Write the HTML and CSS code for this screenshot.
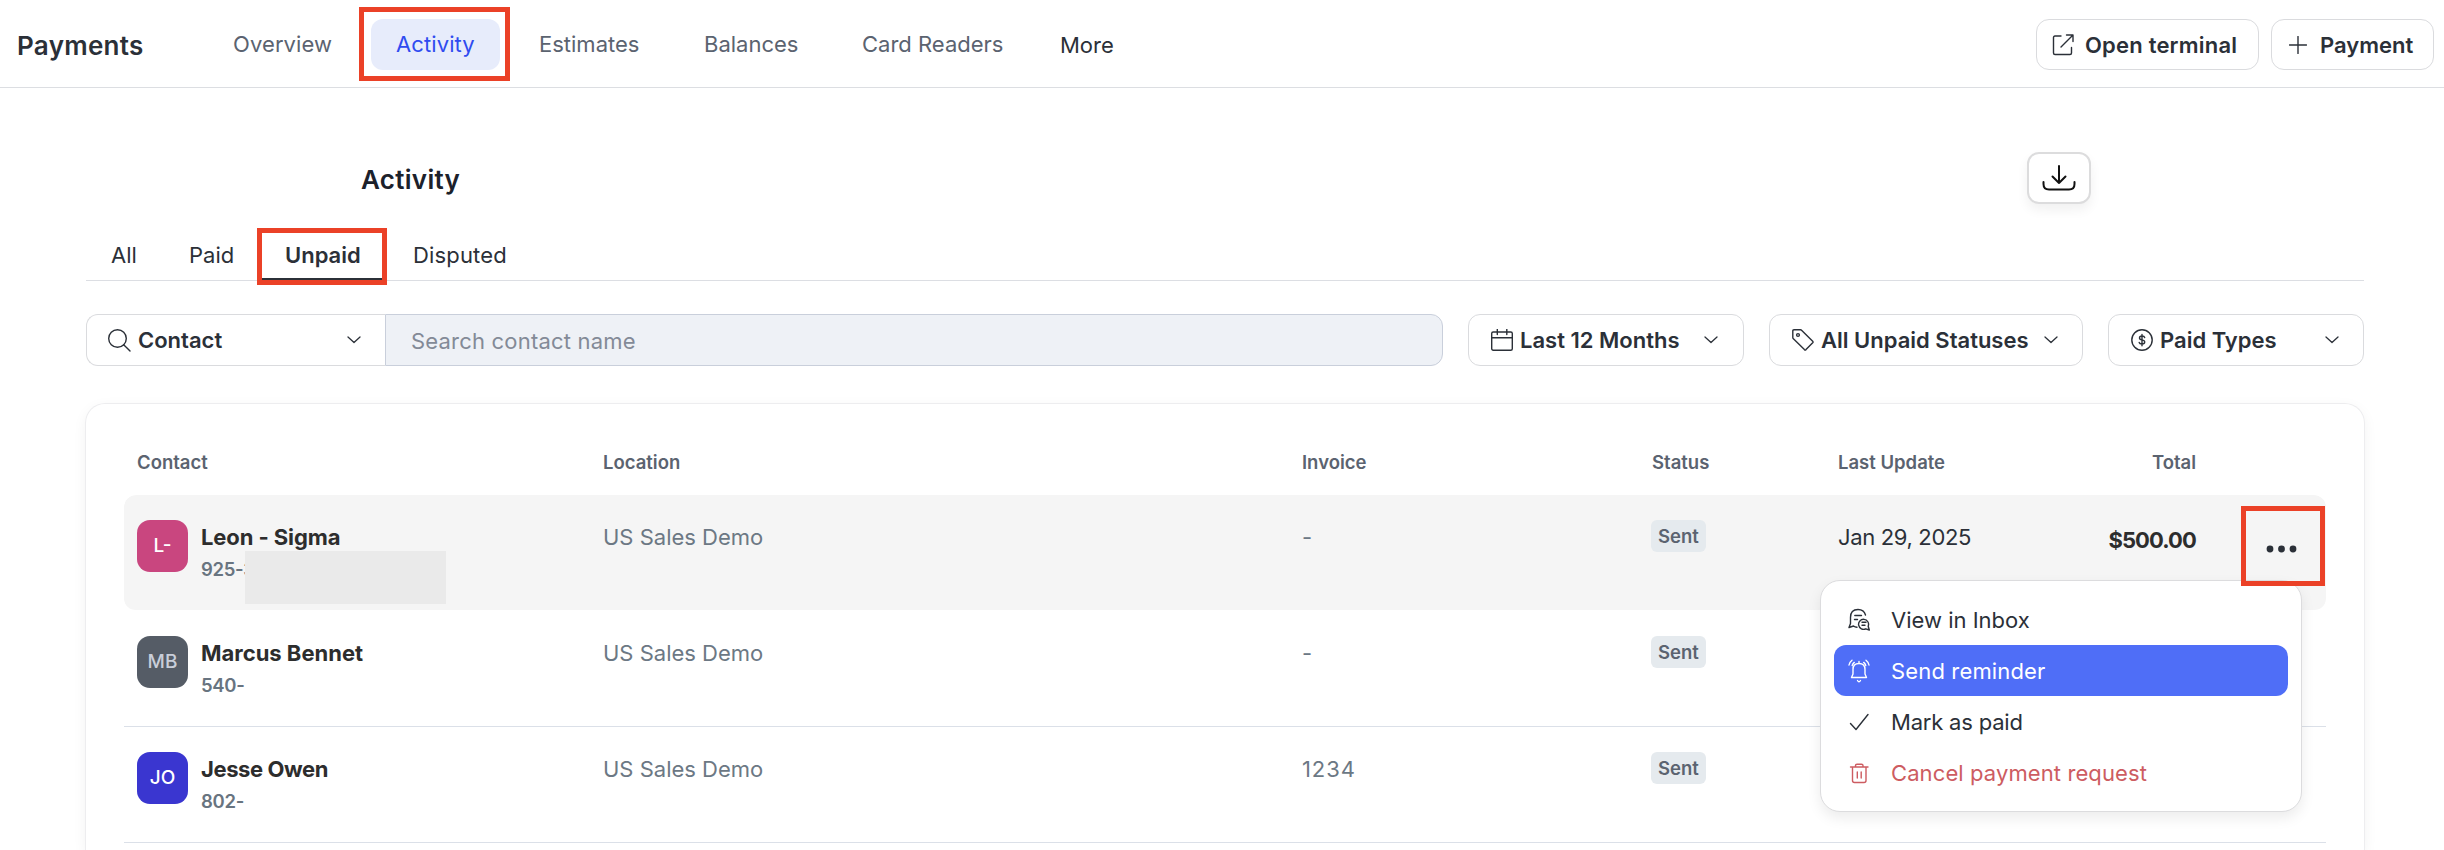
FILE: index.html
```html
<!DOCTYPE html>
<html lang="en">
<head>
  <meta charset="utf-8">
  <title>Payments</title>
  <link rel="stylesheet" href="styles.css">
</head>
<body>
  <header class="topbar">
    <h1 class="brand">Payments</h1>
    <nav class="nav">
      <a class="nav-link overview">Overview</a>
      <a class="nav-link active">Activity<span class="mark mark-nav"></span></a>
      <a class="nav-link estimates">Estimates</a>
      <a class="nav-link balances">Balances</a>
      <a class="nav-link readers">Card Readers</a>
      <a class="nav-link more">More</a>
    </nav>
    <div class="actions">
      <button class="btn terminal">
        <svg width="22" height="22" viewBox="0 0 22 22"><path d="M9 2H3Q1.500 2 1.500 3.500V19Q1.500 20.500 3 20.500H18Q19.500 20.500 19.500 19V13.500M14.500 1H21V7.500M21 1L9 13"/></svg>
        <span>Open terminal</span>
      </button>
      <button class="btn payment">
        <svg width="18" height="18" viewBox="0 0 18 18"><path d="M9 .5V17.500M.5 9H17.500"/></svg>
        <span>Payment</span>
      </button>
    </div>
  </header>

  <div class="page-head">
    <h2>Activity</h2>
    <button class="download">
      <svg width="34" height="26" viewBox="0 0 34 26"><path d="M17 1V18M10.500 11.500L17 18L23.500 11.500M1.500 17V19Q1.500 24.500 7 24.500H27Q32.500 24.500 32.500 19V17"/></svg>
    </button>
  </div>

  <main class="content">
    <div class="tabs">
      <a class="tab all">All</a>
      <a class="tab paid">Paid</a>
      <a class="tab unpaid">Unpaid<span class="mark mark-tab"></span></a>
      <a class="tab disputed">Disputed</a>
    </div>

    <div class="filters">
      <div class="search">
        <button class="search-by">
          <svg width="23" height="23" viewBox="0 0 23 23"><circle cx="9.500" cy="9.500" r="8.800"/><path d="M15.700 15.700L22 22"/></svg>
          <span>Contact</span>
          <svg class="chev" width="14" height="8" viewBox="0 0 14 8"><path d="M1 1L7 6.500L13 1"/></svg>
        </button>
        <div class="search-input"><span>Search contact name</span></div>
      </div>
      <button class="filter months">
        <svg width="22" height="22" viewBox="0 0 22 22"><rect x=".7" y="3" width="20.600" height="18.300" rx="1.500"/><path d="M.7 8.700H21.300M6.300 0V5.500M15.800 0V5.500"/></svg>
        <span>Last 12 Months</span>
        <svg class="chev" width="14" height="8" viewBox="0 0 14 8"><path d="M1 1L7 6.500L13 1"/></svg>
      </button>
      <button class="filter statuses">
        <svg width="22" height="22" viewBox="0 0 22 22"><path d="M2 .8H8.500Q9.200 .8 9.800 1.400L20.700 12.200Q21.400 13 20.700 13.800L14 20.600Q13.200 21.300 12.400 20.600L1.400 9.800Q.8 9.200 .8 8.500V2Q.8 .8 2 .8Z"/><circle cx="6" cy="6" r="1.400"/></svg>
        <span>All Unpaid Statuses</span>
        <svg class="chev" width="14" height="8" viewBox="0 0 14 8"><path d="M1 1L7 6.500L13 1"/></svg>
      </button>
      <button class="filter types">
        <svg width="22" height="22" viewBox="0 0 22 22"><circle cx="11" cy="11" r="10.200"/><path d="M13.700 8.500Q13.300 7 11 7Q8.500 7 8.500 8.900Q8.500 10.400 11 10.900Q13.700 11.400 13.700 13.100Q13.700 15 11 15Q8.500 15 8.200 13.500M11 5.400V16.800"/></svg>
        <span>Paid Types</span>
        <svg class="chev" width="14" height="8" viewBox="0 0 14 8"><path d="M1 1L7 6.500L13 1"/></svg>
      </button>
    </div>

    <section class="card">
      <div class="row head">
        <div>Contact</div>
        <div>Location</div>
        <div>Invoice</div>
        <div>Status</div>
        <div>Last Update</div>
        <div class="h-total">Total</div>
      </div>

      <div class="row item selected">
        <div class="contact">
          <div class="avatar pink">L-</div>
          <div>
            <div class="name leon">Leon - Sigma</div>
            <div class="phone">925-3</div>
          </div>
          <div class="redacted"></div>
        </div>
        <div class="location"><span>US Sales Demo</span></div>
        <div class="invoice">-</div>
        <div><span class="badge">Sent</span></div>
        <div class="date">Jan 29, 2025</div>
        <div class="total">$500.00</div>
        <div class="dots">
          <svg width="32" height="8" viewBox="0 0 32 8"><circle cx="4" cy="4" r="3.400"/><circle cx="15.500" cy="4" r="3.400"/><circle cx="27" cy="4" r="3.400"/></svg>
          <span class="mark mark-dots"></span>
        </div>

        <div class="menu">
          <a class="menu-item inbox">
            <svg width="22" height="24" viewBox="0 0 22 24"><path d="M9 19.200Q7 19 5.500 18L1 19.500L2.500 15.500V9.500Q2.500 1.500 10 1.500Q16 1.500 17.500 7M6.800 7.500H13.500M6.500 11.500H9.500"/><path d="M20.200 18.200L21.300 22L17.800 20.800A5 5 0 1 1 20.200 18.200M14 14.300H18M14 17.200H17"/></svg>
            <span>View in Inbox</span>
          </a>
          <a class="menu-item reminder">
            <svg width="22" height="24" viewBox="0 0 22 24"><path d="M3.500 18.500H18.500L17 15V10.500Q17 4.500 11 4.500Q5 4.500 5 10.500V15ZM11 2.500V4.500M9.500 21.500Q11 24 12.500 21.500M1 6Q1.500 3 4 1.200M4.200 6.500Q4.800 4.600 6.300 3.400M21 6Q20.500 3 18 1.200M17.800 6.500Q17.200 4.600 15.700 3.400"/></svg>
            <span>Send reminder</span>
          </a>
          <a class="menu-item mark-paid">
            <svg width="22" height="24" viewBox="0 0 22 24"><path d="M2.500 13.500L8 19.500L20 4.500"/></svg>
            <span>Mark as paid</span>
          </a>
          <a class="menu-item cancel">
            <svg width="22" height="24" viewBox="0 0 22 24"><path d="M2.500 6H20M4.500 6V19.500Q4.500 21.500 6.500 21.500H16Q18 21.500 18 19.500V6M7.500 6V4.500Q7.500 3.200 9 3.200H13.500Q15 3.200 15 4.500V6M9.300 11V17M13.200 11V17"/></svg>
            <span>Cancel payment request</span>
          </a>
        </div>
      </div>

      <div class="row item">
        <div class="contact">
          <div class="avatar gray">MB</div>
          <div>
            <div class="name marcus">Marcus Bennet</div>
            <div class="phone">540-</div>
          </div>
        </div>
        <div class="location"><span>US Sales Demo</span></div>
        <div class="invoice">-</div>
        <div><span class="badge">Sent</span></div>
      </div>

      <div class="row item">
        <div class="contact">
          <div class="avatar blue">JO</div>
          <div>
            <div class="name jesse">Jesse Owen</div>
            <div class="phone">802-</div>
          </div>
        </div>
        <div class="location"><span>US Sales Demo</span></div>
        <div class="invoice number">1234</div>
        <div><span class="badge">Sent</span></div>
      </div>
    </section>
  </main>
</body>
</html>
```
FILE: styles.css
```css
* {
  box-sizing: border-box;
}

body {
  margin: 0;
  height: 850px;
  overflow: hidden;
  background: #fff;
  color: #2b3038;
  font-family: Inter, "Liberation Sans", sans-serif;
  font-size: 22px;
  line-height: 28px;
}

h1, h2 {
  margin: 0;
  font-size: 26px;
  font-weight: 600;
  line-height: 32px;
  letter-spacing: .3px;
}

button {
  margin: 0;
  padding: 0;
  border: 1px solid #dadbde;
  background: #fff;
  color: #2b3038;
  font: inherit;
  font-weight: 600;
  text-align: left;
}

svg {
  display: block;
  flex: none;
  fill: none;
  stroke: currentColor;
  stroke-width: 1.4;
  stroke-linecap: round;
  stroke-linejoin: round;
}

span {
  white-space: nowrap;
}

.mark {
  position: absolute;
  border: 5px solid #eb4127;
}

/* top bar */
.topbar {
  display: flex;
  height: 88px;
  padding: 19px 10px 0 17px;
  border-bottom: 1px solid #dcdee2;
}

.brand {
  width: 186px;
  margin-top: 11px;
}

.nav {
  display: flex;
  color: #5b6370;
}

.nav-link {
  height: 51px;
  padding: 11px 30px 0;
  white-space: nowrap;
}

.overview {
  width: 168px;
  letter-spacing: .1px;
}

.nav-link.active {
  position: relative;
  width: 129px;
  padding: 11px 0 0 25px;
  border-radius: 12px;
  background: #e7ecfb;
  color: #2f4bf0;
  letter-spacing: .1px;
}

.mark-nav {
  left: -12px;
  top: -12px;
  width: 151px;
  height: 74px;
}

.estimates {
  width: 165px;
  padding-left: 39px;
}

.balances {
  width: 165px;
  padding-left: 39px;
}

.readers {
  width: 200px;
  padding-left: 32px;
}

.more {
  padding-top: 12px;
  color: #2b3038;
}

.actions {
  display: flex;
  gap: 12px;
  margin-left: auto;
}

.btn {
  display: flex;
  align-items: center;
  height: 51px;
  border-radius: 13px;
}

.terminal {
  width: 223px;
  padding-left: 15px;
  gap: 11px;
  letter-spacing: .2px;
}

.payment {
  width: 163px;
  padding-left: 17px;
  gap: 13px;
}

/* page heading */
.page-head {
  display: flex;
  justify-content: space-between;
  height: 140px;
  padding: 64px 353px 0 361px;
}

.page-head h2 {
  margin-top: 12px;
  color: #1c212b;
}

.download {
  display: flex;
  align-items: center;
  justify-content: center;
  width: 64px;
  height: 52px;
  border: 2px solid #dcdcdd;
  border-radius: 12px;
  color: #111;
  box-shadow: 0 6px 12px rgba(0, 0, 0, .06);
}

.download svg {
  stroke-width: 2;
}

.content {
  margin: 0 79px 0 85px;
}

/* tabs */
.tabs {
  display: flex;
  height: 53px;
  margin-left: 1px;
  margin-right: 1px;
  border-bottom: 1px solid #dcdee3;
}

.tab {
  height: 53px;
  padding-top: 13px;
}

.all {
  width: 77px;
  padding-left: 25px;
}

.paid {
  width: 99px;
  padding-left: 26px;
}

.unpaid {
  position: relative;
  width: 120px;
  padding-left: 23px;
  border-bottom: 3px solid #2b3038;
  font-weight: 600;
}

.mark-tab {
  left: -5px;
  top: 0;
  width: 130px;
  height: 57px;
}

.disputed {
  padding-left: 31px;
  letter-spacing: .15px;
}

/* filters */
.filters {
  display: flex;
  gap: 25px;
  height: 52px;
  margin: 33px 1px 37px;
}

.search {
  display: flex;
  width: 1357px;
}

.search-by {
  display: flex;
  align-items: center;
  width: 299px;
  padding: 0 24px 0 21px;
  gap: 7px;
  border-right: 0;
  border-radius: 12px 0 0 12px;
}

.search-input {
  flex: 1;
  padding: 12px 0 0 25px;
  border: 1px solid #c9cfdb;
  border-radius: 0 12px 12px 0;
  background: #eef1f6;
  color: #838a97;
  letter-spacing: .2px;
}

.filter {
  display: flex;
  align-items: center;
  gap: 7px;
  padding: 0 24px 0 22px;
  border-radius: 12px;
}

.chev {
  margin-left: auto;
  stroke-width: 1.3;
}

.months {
  width: 276px;
  padding-right: 25px;
}

.statuses {
  width: 314px;
}

.types {
  width: 256px;
}

/* table */
.card {
  height: 447px;
  padding: 40px 38px 0;
  border: 1px solid #ededef;
  border-bottom: 0;
  border-radius: 20px 20px 0 0;
  box-shadow: 0 4px 14px rgba(0, 0, 0, .05);
}

.row {
  display: grid;
  grid-template-columns: 466px 699px 350px 186px 221px 137px 143px;
  padding-left: 13px;
}

.head {
  height: 51px;
  padding-top: 4px;
  color: #5b6370;
  font-size: 18.500px;
  font-weight: 600;
}

.h-total,
.total {
  text-align: right;
}

.item {
  position: relative;
  width: 2202px;
  height: 116px;
  padding-top: 25px;
  border-bottom: 1px solid #dbe0e8;
}

.selected {
  border-bottom-color: transparent;
  border-radius: 12px;
  background: #f5f5f5;
  background-clip: padding-box;
}

.contact {
  position: relative;
  display: flex;
  gap: 13px;
}

.avatar {
  display: flex;
  align-items: center;
  justify-content: center;
  width: 51px;
  height: 52px;
  border-radius: 13px;
  color: #fff;
  font-size: 19px;
  font-weight: 500;
}

.pink {
  background: #c9467f;
}

.gray {
  background: #555c66;
  color: #c9ced9;
}

.blue {
  background: #3a36d0;
}

.name {
  margin-top: 3px;
  color: #2d2d2d;
  font-weight: 700;
}

.leon {
  letter-spacing: -.1px;
}

.jesse {
  letter-spacing: -.4px;
}

.phone {
  margin-top: 4px;
  color: #687480;
  font-size: 18.500px;
  font-weight: 600;
  letter-spacing: -.3px;
}

.redacted {
  position: absolute;
  left: 108px;
  top: 31px;
  width: 201px;
  height: 53px;
  background: #eaeaea;
}

.location,
.invoice {
  padding-top: 3px;
  color: #6c7884;
}

.number {
  letter-spacing: .9px;
}

.badge {
  display: block;
  width: 55px;
  height: 32px;
  margin-left: -1px;
  border-radius: 6px;
  background: #e5eaee;
  color: #5b6370;
  font-size: 18.500px;
  font-weight: 600;
  line-height: 33px;
  text-align: center;
}

.date {
  padding-top: 3px;
  letter-spacing: -.35px;
}

.total {
  padding-top: 6px;
  color: #2d2d2d;
  font-weight: 700;
  letter-spacing: -.9px;
}

.dots {
  padding: 25px 0 0 70px;
}

.dots svg {
  fill: #2b3038;
  stroke: none;
}

.mark-dots {
  right: 1px;
  top: 11px;
  z-index: 2;
  width: 84px;
  height: 80px;
}

/* row menu */
.menu {
  position: absolute;
  right: 24px;
  top: 85px;
  z-index: 1;
  width: 482px;
  height: 232px;
  padding: 13px;
  border: 1px solid #dcdcde;
  border-radius: 20px;
  background: #fff;
  box-shadow: 0 6px 14px rgba(0, 0, 0, .08);
}

.menu-item {
  display: flex;
  align-items: center;
  gap: 21px;
  height: 51px;
  padding: 1px 0 0 14px;
  border-radius: 12px;
}

.menu-item.reminder {
  background: #4f6ef7;
  color: #fff;
  letter-spacing: .15px;
}

.mark-paid {
  letter-spacing: -.2px;
}

.cancel {
  color: #cd5c61;
  letter-spacing: .1px;
}
```
